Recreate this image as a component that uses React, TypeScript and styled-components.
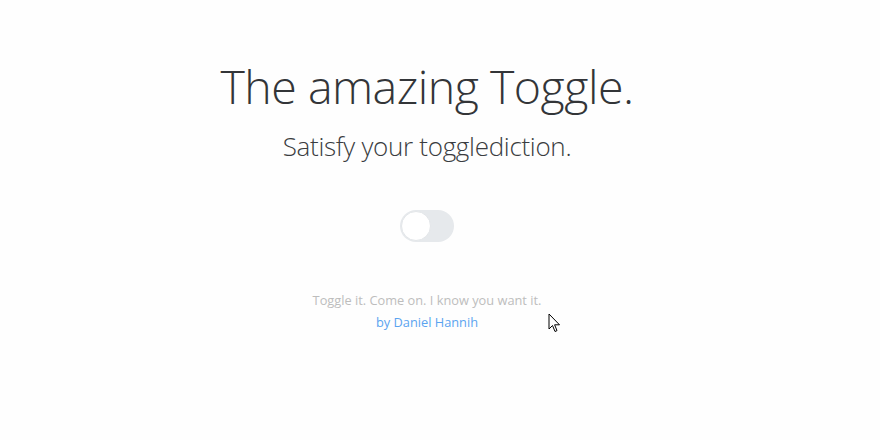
import React, {useState} from "react";
import styled, {createGlobalStyle} from "styled-components";

const GlobalStyle = createGlobalStyle`
  html, body {
    margin: 0;
    padding: 0;
    background: #fefefe;
  }
  body {
    font-family: "Open Sans", "Liberation Sans", sans-serif;
  }
`

const Page = styled.div`
  position: relative;
  width: 854px;
  height: 440px;
  display: flex;
  flex-direction: column;
  align-items: center;
  padding-top: 56px;
  box-sizing: border-box;
`

const Title = styled.h1`
  margin: 0;
  font-family: "Open Sans", sans-serif;
  font-weight: 300;
  font-size: 46.5px;
  line-height: 60px;
  color: #333538;
  letter-spacing: -0.5px;
`

const Subtitle = styled.h2`
  margin: 12px 0 0;
  font-family: "Open Sans", sans-serif;
  font-weight: 300;
  font-size: 26px;
  line-height: 36px;
  color: #3a3c40;
  letter-spacing: -0.3px;
`

const Track = styled.button<{ $on: boolean }>`
  // sizing
  width: 54px;
  height: 32px;
  margin-top: 46px;
  padding: 0;
  box-sizing: border-box;

  // look
  border: none;
  border-radius: 16px;
  background: ${props => props.$on ? '#7ecb8f' : '#e6e9ec'};
  cursor: pointer;
  position: relative;
  transition: background 0.2s ease-in-out;
`

const Knob = styled.span<{ $on: boolean }>`
  position: absolute;
  top: 1px;
  left: ${props => props.$on ? '23px' : '1px'};
  width: 30px;
  height: 30px;
  border-radius: 50%;
  background: #ffffff;
  box-sizing: border-box;
  border: 1.5px solid #e3e6e9;
  transition: left 0.2s ease-in-out;
`

const Footer = styled.div`
  margin-top: 48px;
  display: flex;
  flex-direction: column;
  align-items: center;
  gap: 2px;
  font-family: "Open Sans", sans-serif;
  font-size: 12.8px;
  line-height: 20px;
`

const Note = styled.span`
  color: #bdbdbd;
`

const Credit = styled.a`
  color: #5aa4f0;
  text-decoration: none;
`

const Pointer = styled.svg`
  position: absolute;
  left: 548px;
  top: 313px;
`

const App: React.FC = () => {
  const [isOn, setIsOn] = useState(false)

  return (
    <Page>
      <GlobalStyle/>
      <Title>The amazing Toggle.</Title>
      <Subtitle>Satisfy your togglediction.</Subtitle>
      <Track $on={isOn} onClick={() => setIsOn(!isOn)} aria-label="toggle">
        <Knob $on={isOn}/>
      </Track>
      <Footer>
        <Note>Toggle it. Come on. I know you want it.</Note>
        <Credit href="#">by Daniel Hannih</Credit>
      </Footer>
      {/* mouse pointer left in the screenshot */}
      <Pointer width="14" height="22" viewBox="0 0 14 22">
        <path d="M1 1 L1 16 L4.5 12.5 L7 18.5 L9 17.6 L6.6 11.8 L11.5 11.8 Z"
              fill="#fff" stroke="#000" strokeWidth="1" strokeLinejoin="miter"/>
      </Pointer>
    </Page>
  )
}

export default App
